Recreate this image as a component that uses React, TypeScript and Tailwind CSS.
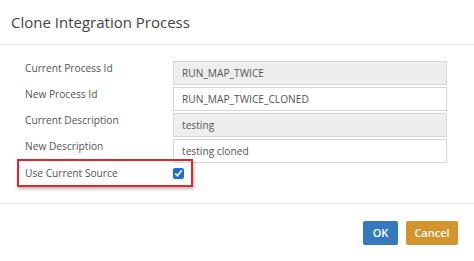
import * as React from "react";

const fields = [
  { label: "Current Process Id", value: "RUN_MAP_TWICE", readOnly: true },
  { label: "New Process Id", value: "RUN_MAP_TWICE_CLONED", readOnly: false },
  { label: "Current Description", value: "testing", readOnly: true },
  { label: "New Description", value: "testing cloned", readOnly: false },
];

export default function App() {
  const [useSource, setUseSource] = React.useState(true);

  return (
    <div className="w-[474px] h-[261px] bg-white font-['Open_Sans',sans-serif] text-[#555]">
      {/* header */}
      <div className="h-[45px] border-b border-[#e8e8e8] pl-[11px] pt-[11px]">
        <h2 className="text-[15px] leading-[22px] text-[#444]">Clone Integration Process</h2>
      </div>

      {/* body */}
      <div className="border-b border-[#e8e8e8] pl-[25px] pt-[16px] pb-[20px]">
        <div className="flex flex-col gap-[2px]">
          {fields.map((f) => (
            <div key={f.label} className="flex">
              <label className="w-[148px] text-[10.2px] leading-[15px] text-[#555]">
                {f.label}
              </label>
              <input
                type="text"
                defaultValue={f.value}
                readOnly={f.readOnly}
                className={
                  "h-[24px] w-[274px] border border-[#d6d6d6] px-[8px] text-[10.2px] text-[#555] outline-none " +
                  (f.readOnly ? "bg-[#eeeeee]" : "bg-white")
                }
              />
            </div>
          ))}
        </div>

        {/* use current source */}
        <div className="relative flex h-[20px] items-center">
          <label htmlFor="useSource" className="w-[148px] text-[10.2px] leading-[15px] text-[#555]">
            Use Current Source
          </label>
          <input
            id="useSource"
            type="checkbox"
            checked={useSource}
            onChange={(e) => setUseSource(e.target.checked)}
            className="m-0 h-[11px] w-[11px] accent-[#1a6fe0]"
          />
          {/* highlight */}
          <div className="pointer-events-none absolute left-[-8px] top-[-4px] h-[28px] w-[176px] border-2 border-[#e0262b] shadow-[1px_2px_3px_rgba(0,0,0,0.3)]" />
        </div>
      </div>

      {/* footer */}
      <div className="flex justify-end gap-[8px] pr-[16px] pt-[17px]">
        <button className="h-[24px] w-[35px] rounded-[2px] bg-[#3479bd] text-[11px] font-semibold text-white">
          OK
        </button>
        <button className="h-[24px] w-[52px] rounded-[2px] bg-[#d3942b] text-[11px] font-semibold text-white">
          Cancel
        </button>
      </div>
    </div>
  );
}
